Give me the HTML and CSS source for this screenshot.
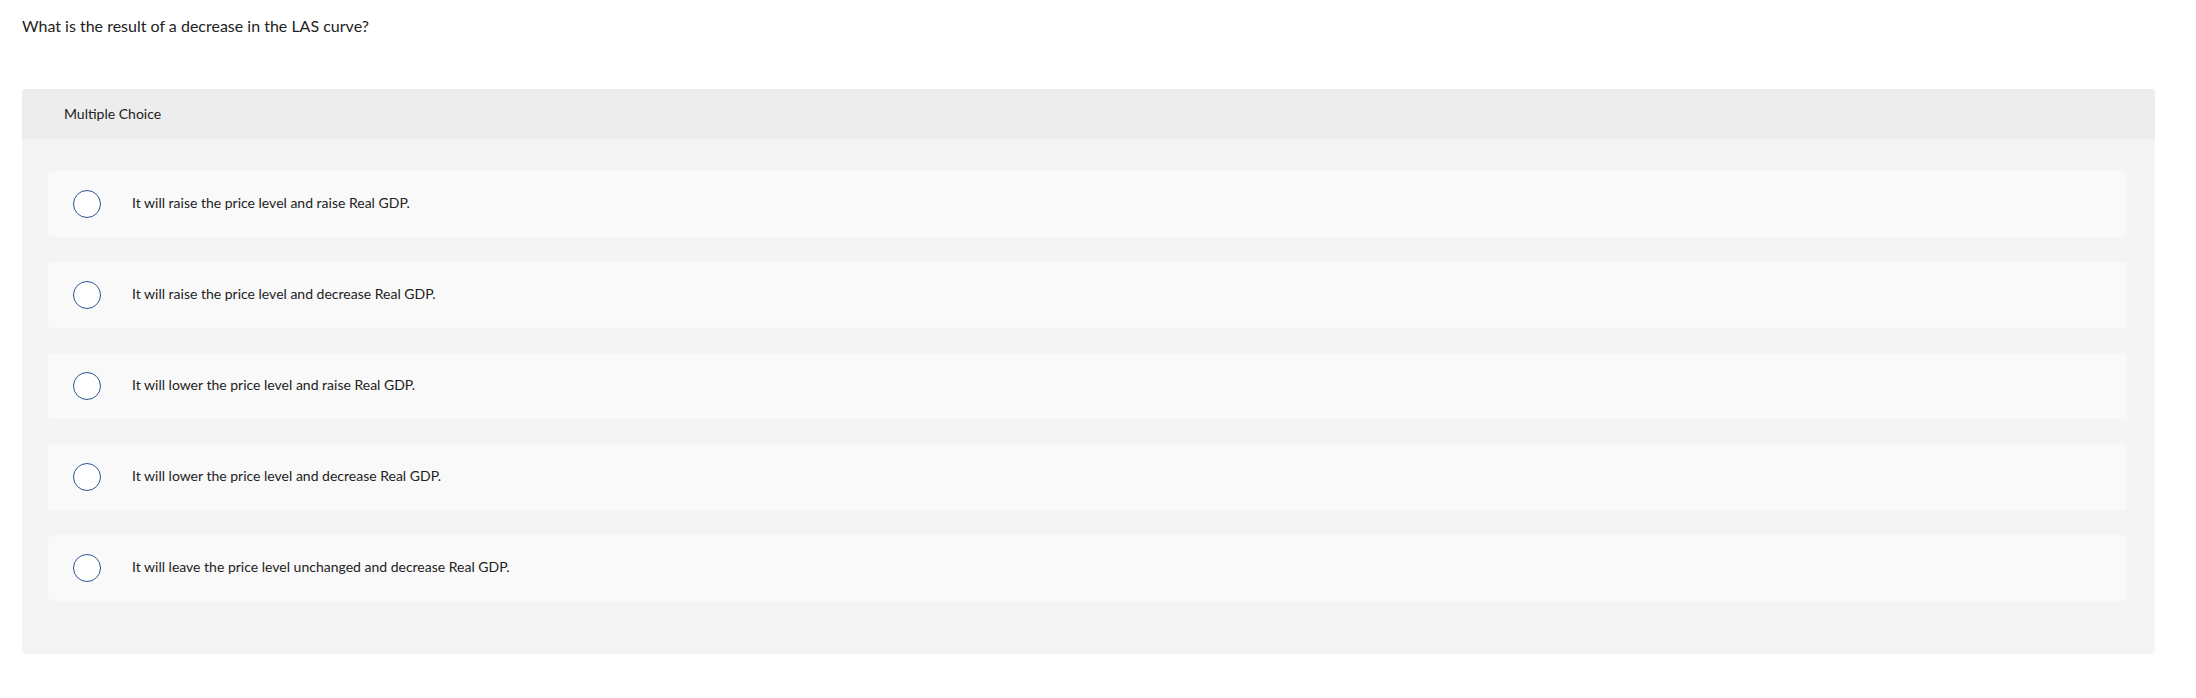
FILE: index.html
```html
<!DOCTYPE html>
<html lang="en">
<head>
<meta charset="utf-8">
<title>Multiple Choice</title>
<link rel="stylesheet" href="styles.css">
</head>
<body>
<main class="page">
  <p class="question">What is the result of a decrease in the LAS curve?</p>
  <section class="panel">
    <header class="panel-header">Multiple Choice</header>
    <div class="options">
      <label class="option"><span class="radio"></span><span class="option-text">It will raise the price level and raise Real GDP.</span></label>
      <label class="option"><span class="radio"></span><span class="option-text">It will raise the price level and decrease Real GDP.</span></label>
      <label class="option"><span class="radio"></span><span class="option-text">It will lower the price level and raise Real GDP.</span></label>
      <label class="option"><span class="radio"></span><span class="option-text">It will lower the price level and decrease Real GDP.</span></label>
      <label class="option"><span class="radio"></span><span class="option-text">It will leave the price level unchanged and decrease Real GDP.</span></label>
    </div>
  </section>
</main>
</body>
</html>
```

FILE: styles.css
```css
html, body {
  margin: 0;
  padding: 0;
  background: #ffffff;
}

body {
  font-family: Lato, "Open Sans", "Liberation Sans", sans-serif;
  color: #222222;
}

.page {
  padding: 16px 41px 0 22px;
}

.question {
  margin: 0;
  font-size: 16px;
  line-height: 20px;
  color: #222222;
}

.panel {
  margin-top: 53px;
  background: #f4f4f4;
  border-radius: 4px;
  overflow: hidden;
}

.panel-header {
  height: 50px;
  box-sizing: border-box;
  background: #ededed;
  display: flex;
  align-items: center;
  padding-left: 42px;
  padding-bottom: 2px;
  font-size: 14px;
  color: #222222;
}

.options {
  display: flex;
  flex-direction: column;
  gap: 25px;
  padding: 32px 28px 53px 26px;
}

.option {
  height: 66px;
  box-sizing: border-box;
  background: #f9f9f9;
  border-radius: 4px;
  display: flex;
  align-items: center;
  padding-left: 25px;
}

.radio {
  width: 26px;
  height: 26px;
  border: 1.5px solid #2c5592;
  border-radius: 50%;
  background: #ffffff;
  flex: none;
}

.option-text {
  margin-left: 31px;
  padding-bottom: 3px;
  font-size: 14px;
  color: #222222;
}
```
